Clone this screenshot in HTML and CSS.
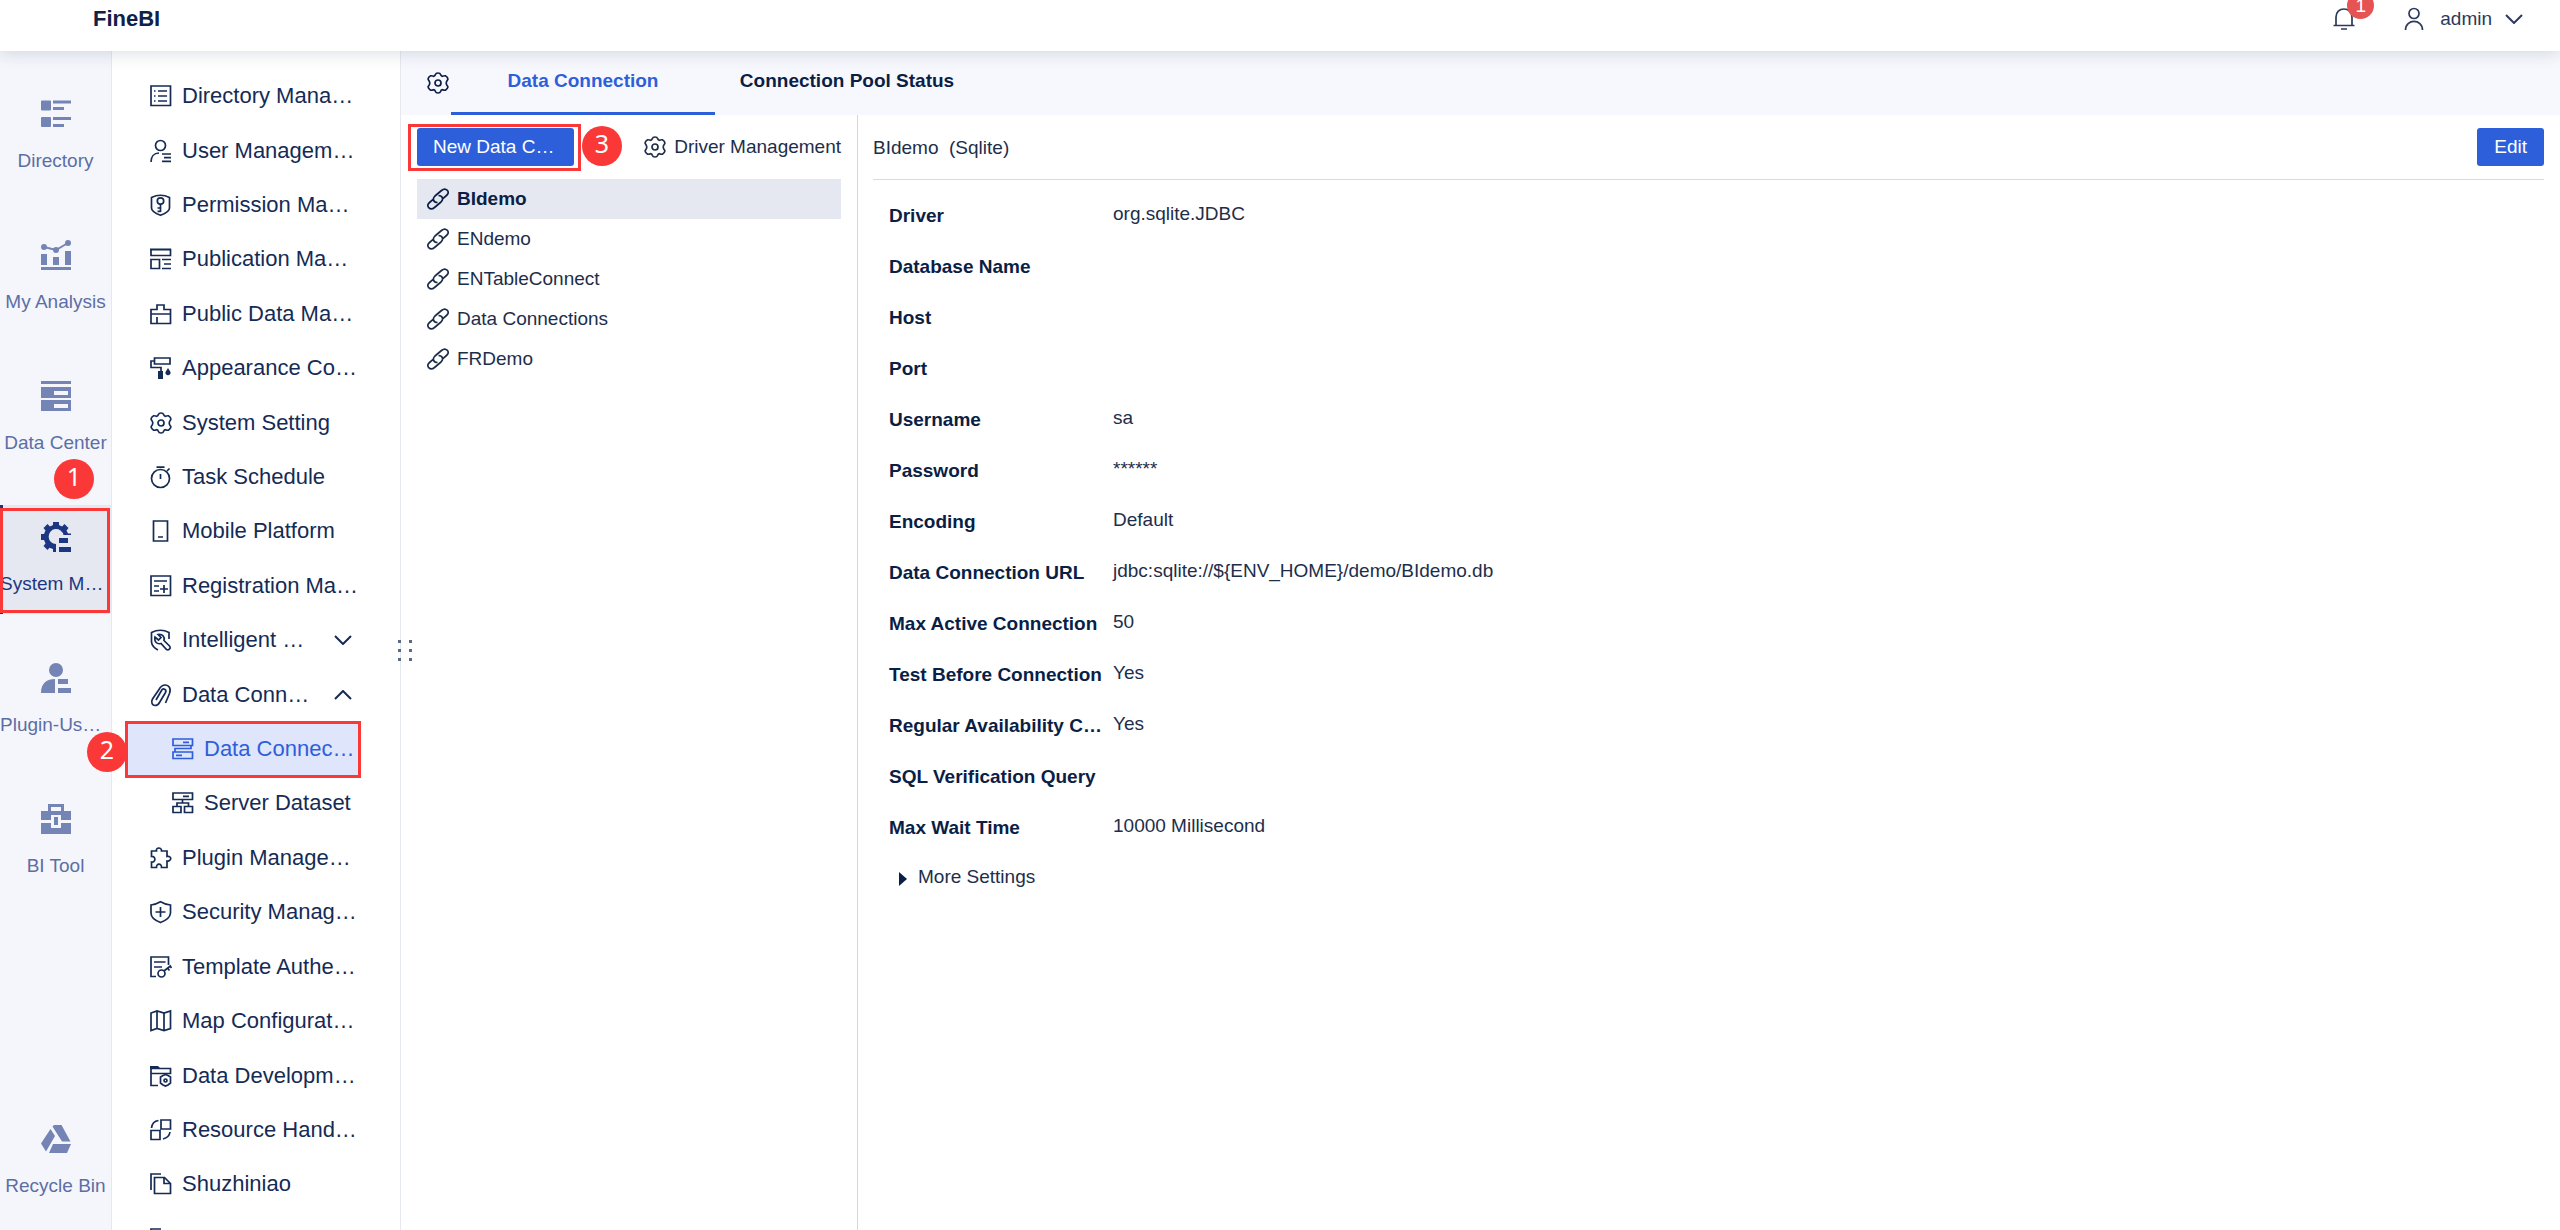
FILE: index.html
```
<!DOCTYPE html>
<html lang="en">
<head>
    <meta charset="UTF-8">
    <title>FineBI</title>
    <link rel="stylesheet" href="styles.css">
</head>
<body>
    <!-- shared icons -->
    <svg class="sprite" aria-hidden="true">
        <symbol id="gear" viewBox="0 0 22 22">
            <path d="M8.4 2.6Q8.8 1 11 1T13.600 2.600Q14 4 15.400 4.300Q17.500 3.500 18.600 3.900Q21.300 5.800 20.800 7.400Q19.200 9.500 19.200 11T20.800 14.600Q21.300 16.200 18.600 18.100Q17.500 18.500 15.400 17.700Q14 18 13.600 19.400Q13.200 21 11 21T8.400 19.400Q8 18 6.600 17.700Q4.500 18.500 3.400 18.100Q.7 16.200 1.200 14.600Q2.800 12.500 2.800 11T1.200 7.400Q.7 5.800 3.400 3.900Q4.500 3.500 6.600 4.300Q8 4 8.400 2.600Z"/>
            <circle cx="11" cy="11" r="3"/>
        </symbol>
        <symbol id="link" viewBox="0 0 22 22">
            <path d="M10.500 14.500C6.500 14.500 5 11 8 8L14.500 2.500C16.500.8 18.800.8 20.300 2.300C21.800 4 21.300 6 19.500 7.500L15 11.300M11.500 7.500C15.500 7.500 17 11 14 14L7.500 19.500C5.500 21.200 3.200 21.200 1.700 19.700C.2 18 .7 16 2.500 14.500L7 10.700"/>
        </symbol>
        <symbol id="down" viewBox="0 0 18 10"><path d="M1 1L9 9L17 1"/></symbol>
        <symbol id="up" viewBox="0 0 18 10"><path d="M1 9L9 1L17 9"/></symbol>
    </svg>

    <header class="header">
        <h1 class="brand">FineBI</h1>
        <button class="bell" aria-label="Notifications">
            <svg class="icon" viewBox="0 0 22 22"><path d="M3 17V9C3 4 6.500 1 11 1S19 4 19 9V17M.5 17.500H21.500M8 21H14"/></svg>
            <span class="badge">1</span>
        </button>
        <button class="account">
            <svg class="icon" viewBox="0 0 22 22"><circle cx="11" cy="5.500" r="5"/><path d="M2.500 22C2.500 10.500 19.500 10.500 19.500 22"/></svg>
            <span>admin</span>
            <svg class="chevron"><use href="#down"/></svg>
        </button>
    </header>

    <div class="layout">
        <nav class="rail">
            <a href="#" class="rail-item">
                <svg viewBox="0 0 30 30"><path d="M1 1.500H9Q10 1.500 10 2.500V10.500Q10 11.500 9 11.500H1Q0 11.500 0 10.500V2.500Q0 1.500 1 1.500ZM12 1.500H30V4.500H12ZM12 8H23V11H12ZM1 18H9Q10 18 10 19V27Q10 28 9 28H1Q0 28 0 27V19Q0 18 1 18ZM12 18H30V21H12ZM12 25H23V28H12Z"/></svg>
                <span>Directory</span>
            </a>
            <a href="#" class="rail-item">
                <svg viewBox="0 0 30 30"><path d="M0 14H6V25H0ZM12 17H18V25H12ZM24 11H30V25H24ZM0 27H30V30H0Z"/><circle cx="3" cy="7" r="3"/><circle cx="15" cy="10" r="3"/><circle cx="27" cy="3" r="3"/><path class="line" d="M3 7L15 10L27 3"/></svg>
                <span>My Analysis</span>
            </a>
            <a href="#" class="rail-item">
                <svg viewBox="0 0 30 30"><path fill-rule="evenodd" d="M0 0H30V3H0ZM0 6H30V17H0ZM13 10V14H27V10ZM0 19H30V30H0ZM13 23V27H27V23Z"/></svg>
                <span>Data Center</span>
            </a>
            <a href="#" class="rail-item active">
                <svg viewBox="0 0 30 30"><path d="M12 0H18V3L21 4.500L23.500 2L27.500 6L25.500 8.500L27 11.500H30V13H22.500A7.500 7.500 0 1 0 15 22V30H12V27L8.500 25.700L6.500 28L2.500 24L4.500 21.500L3 18H0V12H3L4.500 8.500L2.500 6L6.500 2L9 4.500L12 3ZM18 16H27V21H18ZM18 25H30V30H18Z"/></svg>
                <span class="cut">System M…</span>
                <i class="mark-box mark-box-1"></i>
                <b class="mark mark-1">1</b>
            </a>
            <a href="#" class="rail-item">
                <svg viewBox="0 0 30 30"><circle cx="15" cy="7" r="7"/><path d="M0 30C0 20 6 16 14 16V30ZM17 16H27V21H17ZM17 25H30V30H17Z"/></svg>
                <span class="cut">Plugin-Us…</span>
            </a>
            <a href="#" class="rail-item">
                <svg viewBox="0 0 30 30"><path fill-rule="evenodd" d="M7 0H23V7H30V16H20V11H10V16H0V7H7ZM10 3V7H20V3ZM13 13H17V21H13ZM0 19H10V24H20V19H30V30H0Z"/></svg>
                <span>BI Tool</span>
            </a>
            <a href="#" class="rail-item recycle">
                <svg viewBox="0 0 30 30"><path d="M9.500 5L14 12L5 27.500L0 19.500ZM13 1H20.500L29.500 17.500H21L11.500 2.500ZM12 20H30L26 29H8Z"/></svg>
                <span>Recycle Bin</span>
            </a>
        </nav>

        <nav class="menu">
            <ul class="menu-list">
                <li><a href="#"><svg class="icon" viewBox="0 0 22 22"><path d="M1 1H20.500V20.500H1ZM4 6H5.500M8 6H17M4 11H5.500M8 11H17M4 16H5.500M8 16H17"/></svg>Directory Mana…</a></li>
                <li><a href="#"><svg class="icon" viewBox="0 0 22 22"><circle cx="10.500" cy="5.500" r="5"/><path d="M1 22C1 16.500 4 13 9 13M12 14H21M14 17.700H21M12 21.300H21"/></svg>User Managem…</a></li>
                <li><a href="#"><svg class="icon" viewBox="0 0 22 22"><path d="M1.500 3.500Q10.500-1 19.500 3.500V14Q19.500 18 10.500 21.300Q1.500 18 1.500 14Z"/><circle cx="10.500" cy="7" r="3.200"/><path d="M10.500 10V18M10.500 14H7.500M10.500 17.300H7.500"/></svg>Permission Ma…</a></li>
                <li><a href="#"><svg class="icon" viewBox="0 0 22 22"><path d="M1 1.500H20.500V7.500H1ZM1 11.500H9.500V20.500H1ZM12 11.500H21M14 16H21M12 20.500H21"/><path d="M0 1.500H21"/></svg>Publication Ma…</a></li>
                <li><a href="#"><svg class="icon" viewBox="0 0 22 22"><path d="M1 6.500H7V2H14V6.500H20.500V20.500H1ZM1 11H20.500M7 14V20"/></svg>Public Data Ma…</a></li>
                <li><a href="#"><svg class="icon" viewBox="0 0 22 22"><path d="M4.500 1H20V7H4.500ZM4.500 4H1V10.500H11V15"/><path class="fill" d="M8 14H13V22H8ZM18 11L20.500 15A2.600 2.600 0 1 1 15.500 15Z"/></svg>Appearance Co…</a></li>
                <li><a href="#"><svg class="icon"><use href="#gear"/></svg>System Setting</a></li>
                <li><a href="#"><svg class="icon" viewBox="0 0 22 22"><circle cx="10.500" cy="12.500" r="9"/><path d="M6.500 1.200H14.500M10.500 8V13M17 5L19.500 2.500"/></svg>Task Schedule</a></li>
                <li><a href="#"><svg class="icon" viewBox="0 0 22 22"><path d="M3.500 1H17.500V21H3.500ZM8 17H13"/></svg>Mobile Platform</a></li>
                <li><a href="#"><svg class="icon" viewBox="0 0 22 22"><path d="M1 1H20.500V20.500H1ZM4 6H17M4 11H9M4 16H9M14 10V18M10 14H18"/></svg>Registration Ma…</a></li>
                <li><a href="#"><svg class="icon" viewBox="0 0 22 22"><path d="M19 10V3.500Q10.500-1 1.500 3.500V13Q2 18 8 21"/><path d="M8 5.500L11 8.500L8.500 11L5 8C4 13 7 15.500 11 14.500L16.500 20.500Q18.500 21.500 20 19.500Q20.500 18 19.500 17L14 11.500C15 7.500 12 4.500 8 5.500Z"/></svg>Intelligent …<svg class="chevron"><use href="#down"/></svg></a></li>
                <li><a href="#"><svg class="icon" viewBox="0 0 22 22"><path d="M15.500 19L19.500 9.500C21.500 4 18.500 1 15.500 1C12.500 1 10.500 2.500 9 5.500L2.500 15C.5 18.500 2.500 21.500 5 21.500C7 21.500 8.500 20.500 9.500 18.500L15.500 8.500C17 5.500 13 3.500 11.500 6.500L6 16"/></svg>Data Conn…<svg class="chevron"><use href="#up"/></svg></a></li>
                <li class="sub active">
                    <a href="#"><svg class="icon" viewBox="0 0 22 22"><path d="M1 1H20.500V7.500H1ZM11 4.300H17M19 7.500V10.500H3V14M1 14H20.500V20.500H1ZM4 17.300H10"/></svg>Data Connec…</a>
                    <i class="mark-box mark-box-2"></i>
                    <b class="mark mark-2">2</b>
                </li>
                <li class="sub"><a href="#"><svg class="icon" viewBox="0 0 22 22"><path d="M1 1H20.500V7.500H1ZM11 4.300H17M5 14V11H16.500V14M10.500 7.500V11M1 14.500H9V20.500H1ZM12.500 14.500H20.500V20.500H12.500Z"/></svg>Server Dataset</a></li>
                <li><a href="#"><svg class="icon" viewBox="0 0 22 22"><path d="M1.500 4H6.500C5.500 0 12 0 11.500 4H17V9.500C22 8.500 22 14.500 17 14V20.500H11.500C12 16 6 16 6.500 20.500H1.500V15C6 15.500 6 9 1.500 9.500Z"/></svg>Plugin Manage…</a></li>
                <li><a href="#"><svg class="icon" viewBox="0 0 22 22"><path d="M1 4Q6 3.500 10.500 .8Q15 3.500 20.500 4V12Q20 18 10.500 21.500Q1 18 1 12ZM10.500 6V16M5.500 11H15.500"/></svg>Security Manag…</a></li>
                <li><a href="#"><svg class="icon" viewBox="0 0 22 22"><path d="M6 20.500H1V1H18.500V9M4 6H15.500M4 11H12"/><circle cx="11.500" cy="17.500" r="3.500"/><path d="M14 15L21 9.500M17.500 12L19.500 14.500M20 10L21.500 12"/></svg>Template Authe…</a></li>
                <li><a href="#"><svg class="icon" viewBox="0 0 22 22"><path d="M1 3L7 1L14 3L20.500 1V18.500L14 20.500L7 18.500L1 20.500ZM7 1V18.500M14 3V20.500"/></svg>Map Configurat…</a></li>
                <li><a href="#"><svg class="icon" viewBox="0 0 22 22"><path d="M8 20.500H1V3.500H20.500V8.500H1"/><path class="fill" d="M0 1H8L11 4H0Z"/><path d="M13 10.500L15.500 9.500L18 10.500L20.500 12V18L18 20L15.500 21L13 20L10.500 18V12Z"/><circle cx="15.500" cy="15.500" r="1.500"/></svg>Data Developm…</a></li>
                <li><a href="#"><svg class="icon" viewBox="0 0 22 22"><path d="M11 1H20.500V10H11ZM1 11.500H10V20.500H1ZM1.500 9C2 4.500 4.500 2 8.500 1.500M13 20C17 19 19.500 17 20 13"/></svg>Resource Hand…</a></li>
                <li><a href="#"><svg class="icon" viewBox="0 0 22 22"><path d="M1 17V1H11M4.500 4.500H14.500L20.500 10.500V20.500H4.500ZM14 5V10.500H20"/></svg>Shuzhiniao</a></li>
                <li><a href="#" aria-label="More"><svg class="icon" viewBox="0 0 22 22"><path d="M1 17V1H11M4.500 4.500H14.500L20.500 10.500V20.500H4.500ZM14 5V10.500H20"/></svg></a></li>
            </ul>
        </nav>

        <main class="content">
            <i class="splitter"></i>
            <div class="tabs">
                <button class="tab-gear" aria-label="Settings"><svg class="icon"><use href="#gear"/></svg></button>
                <button class="tab active">Data Connection</button>
                <button class="tab">Connection Pool Status</button>
            </div>

            <div class="panels">
                <section class="connections">
                    <div class="toolbar">
                        <div class="new-wrap">
                            <button class="btn btn-new">New Data C…</button>
                            <i class="mark-box mark-box-3"></i>
                            <b class="mark mark-3">3</b>
                        </div>
                        <button class="driver"><svg class="icon"><use href="#gear"/></svg>Driver Management</button>
                    </div>
                    <ul class="connection-list">
                        <li><a href="#" class="active"><svg class="icon"><use href="#link"/></svg>BIdemo</a></li>
                        <li><a href="#"><svg class="icon"><use href="#link"/></svg>ENdemo</a></li>
                        <li><a href="#"><svg class="icon"><use href="#link"/></svg>ENTableConnect</a></li>
                        <li><a href="#"><svg class="icon"><use href="#link"/></svg>Data Connections</a></li>
                        <li><a href="#"><svg class="icon"><use href="#link"/></svg>FRDemo</a></li>
                    </ul>
                </section>

                <section class="detail">
                    <div class="detail-head">
                        <h2>BIdemo&nbsp; (Sqlite)</h2>
                        <button class="btn">Edit</button>
                    </div>
                    <dl class="fields">
                        <dt>Driver</dt><dd>org.sqlite.JDBC</dd>
                        <dt>Database Name</dt><dd></dd>
                        <dt>Host</dt><dd></dd>
                        <dt>Port</dt><dd></dd>
                        <dt>Username</dt><dd>sa</dd>
                        <dt>Password</dt><dd>******</dd>
                        <dt>Encoding</dt><dd>Default</dd>
                        <dt>Data Connection URL</dt><dd>jdbc:sqlite://${ENV_HOME}/demo/BIdemo.db</dd>
                        <dt>Max Active Connection</dt><dd>50</dd>
                        <dt>Test Before Connection</dt><dd>Yes</dd>
                        <dt>Regular Availability C…</dt><dd>Yes</dd>
                        <dt>SQL Verification Query</dt><dd></dd>
                        <dt>Max Wait Time</dt><dd>10000 Millisecond</dd>
                    </dl>
                    <button class="more"><svg viewBox="0 0 8 14"><path d="M0 0L8 7L0 14Z"/></svg>More Settings</button>
                </section>
            </div>
        </main>
    </div>
</body>
</html>
```
FILE: styles.css
```
* {
    box-sizing: border-box;
}
body {
    display: flex;
    flex-direction: column;
    height: 100vh;
    margin: 0;
    overflow: hidden;
    background-color: white;
    color: #1d2e4a;
    font-family: "Liberation Sans", Arial, sans-serif;
    font-size: 19px;
    line-height: 24px;
}
h1, h2, ul, dl, dd {
    margin: 0;
    padding: 0;
}
ul {
    list-style: none;
}
a {
    color: inherit;
    text-decoration: none;
}
button {
    padding: 0;
    border: none;
    background: none;
    color: inherit;
    font: inherit;
    cursor: pointer;
}
.sprite {
    position: absolute;
    width: 0;
    height: 0;
}
.icon {
    flex: none;
    width: 22px;
    height: 22px;
    fill: none;
    stroke: currentColor;
    stroke-width: 1.7;
    overflow: visible;
}
.icon .fill {
    fill: currentColor;
    stroke: none;
}
.chevron {
    flex: none;
    width: 18px;
    height: 10px;
    fill: none;
    stroke: currentColor;
    stroke-width: 2;
}

/* header */
.header {
    position: relative;
    z-index: 2;
    display: flex;
    flex: none;
    align-items: center;
    height: 51px;
    padding: 0 37px 14px 93px;
    background-color: white;
    box-shadow: 0 2px 16px rgba(30, 40, 80, 0.16);
}
.brand {
    margin-right: auto;
    color: #0f2147;
    font-size: 22px;
}
.bell {
    position: relative;
    display: flex;
    margin-right: 48px;
    color: #2c3a5c;
}
.badge {
    position: absolute;
    top: -16px;
    left: 14px;
    width: 27px;
    height: 27px;
    border-radius: 14px;
    background-color: #e55353;
    color: white;
    line-height: 27px;
}
.account {
    display: flex;
    align-items: center;
    color: #2c3a5c;
}
.account span {
    margin: 0 13px 0 15px;
}

.layout {
    display: flex;
    flex: 1;
    min-height: 0;
}

/* left rail */
.rail {
    display: flex;
    flex: none;
    flex-direction: column;
    gap: 32px;
    width: 112px;
    padding: 31px 0 14px;
    border-right: 1px solid #e6e8f0;
    background-color: #f4f6fb;
    color: #5c6ea5;
}
.rail-item {
    position: relative;
    display: flex;
    flex-direction: column;
    gap: 20px;
    align-items: center;
    height: 109px;
    padding-top: 17px;
}
.rail-item svg {
    width: 30px;
    height: 30px;
    fill: #7484b4;
}
.rail-item .line {
    fill: none;
    stroke: #7484b4;
    stroke-width: 2;
}
.rail-item .cut {
    align-self: flex-start;
}
.rail-item.active {
    background-color: #e5e8f1;
    box-shadow: inset 3px 0 #1c3782;
    color: #1c3782;
}
.rail-item.active svg {
    fill: #1c3782;
}
.recycle {
    margin-top: auto;
}

/* system menu */
.menu {
    flex: none;
    width: 288px;
    color: #152b55;
    font-size: 22px;
}
/* the list runs past the bottom edge of the window */
.menu-list {
    display: flex;
    flex-direction: column;
    height: calc(100% + 36px);
    padding: 18px 0 0 13px;
}
.menu-list li {
    position: relative;
    display: flex;
    flex: 1;
    width: 236px;
}
.menu-list a {
    display: flex;
    flex: 1;
    gap: 10px;
    align-items: center;
    padding-left: 25px;
    white-space: nowrap;
}
.menu-list .chevron {
    margin: 0 9px 0 auto;
}
.menu-list .sub a {
    padding-left: 47px;
}
.menu-list .active {
    background-color: #dfe5fa;
    color: #2d5fdb;
}

/* content */
.content {
    position: relative;
    display: flex;
    flex: 1;
    flex-direction: column;
    min-width: 0;
    border-left: 1px solid #e6e8f0;
}
.splitter {
    position: absolute;
    top: 589px;
    left: -3px;
    width: 14px;
    height: 22px;
    background-image: linear-gradient(90deg, #5c6a8a 3px, transparent 3px);
    background-size: 11px 9px;
    -webkit-mask: repeating-linear-gradient(#000 0 3px, transparent 3px 9px);
    mask: repeating-linear-gradient(#000 0 3px, transparent 3px 9px);
}
.tabs {
    display: flex;
    flex: none;
    height: 64px;
    padding-left: 26px;
    background-color: #f7f8fd;
    color: #0b1e45;
    font-weight: bold;
}
.tab-gear {
    width: 24px;
}
.tab-gear .icon {
    display: block;
}
.tab {
    width: 264px;
    padding-bottom: 2px;
    border-bottom: 3px solid transparent;
}
.tab.active {
    border-color: #2d5fdb;
    color: #2d5fdb;
}
.panels {
    display: flex;
    flex: 1;
}
.btn {
    height: 38px;
    padding: 0 17px;
    border-radius: 3px;
    background-color: #2d5fdb;
    color: white;
}
.connections {
    flex: none;
    width: 457px;
    padding: 13px 16px;
    border-right: 1px solid #d5d7dd;
}
.toolbar {
    display: flex;
    justify-content: space-between;
    margin-bottom: 13px;
}
.new-wrap {
    position: relative;
}
.btn-new {
    width: 157px;
    padding: 0 16px;
    text-align: left;
}
.driver {
    display: flex;
    gap: 8px;
    align-items: center;
}
.connection-list a {
    display: flex;
    gap: 8px;
    align-items: center;
    height: 40px;
    padding-left: 10px;
}
.connection-list .active {
    background-color: #e5e8f0;
    color: #0b1e45;
    font-weight: bold;
}
.detail {
    flex: 1;
    padding: 13px 16px 13px 15px;
}
.detail-head {
    display: flex;
    justify-content: space-between;
    height: 52px;
    border-bottom: 1px solid #d9dadd;
}
.detail-head h2 {
    font-size: 19px;
    font-weight: normal;
    line-height: 40px;
}
.fields {
    display: grid;
    grid-template-columns: 224px 1fr;
    grid-auto-rows: 51px;
    padding: 8px 16px 0;
    line-height: 51px;
}
.fields dt {
    color: #0b1e45;
    font-weight: bold;
    line-height: 55px;
}
.more {
    display: flex;
    gap: 11px;
    align-items: center;
    height: 51px;
    margin-left: 26px;
}
.more svg {
    width: 8px;
    height: 14px;
    margin-top: 4px;
    fill: #0b1e45;
}

/* numbered step markers */
.mark,
.mark-box {
    position: absolute;
    z-index: 1;
    pointer-events: none;
}
.mark {
    width: 40px;
    height: 40px;
    border-radius: 50%;
    background-color: #fb3838;
    color: white;
    font-family: "Noto Sans", sans-serif;
    font-size: 25px;
    font-weight: normal;
    line-height: 35px;
    text-align: center;
}
.mark-box {
    border: 3px solid #fb3838;
}
.mark-1 {
    top: -46px;
    left: 54px;
}
.mark-2 {
    top: 10px;
    left: -38px;
}
.mark-3 {
    top: -2px;
    left: 165px;
}
.mark-box-1 {
    inset: 3px 1px 1px 0;
}
.mark-box-2 {
    inset: -1px 0 -2px;
}
.mark-box-3 {
    inset: -4px -7px -5px -9px;
}
```
